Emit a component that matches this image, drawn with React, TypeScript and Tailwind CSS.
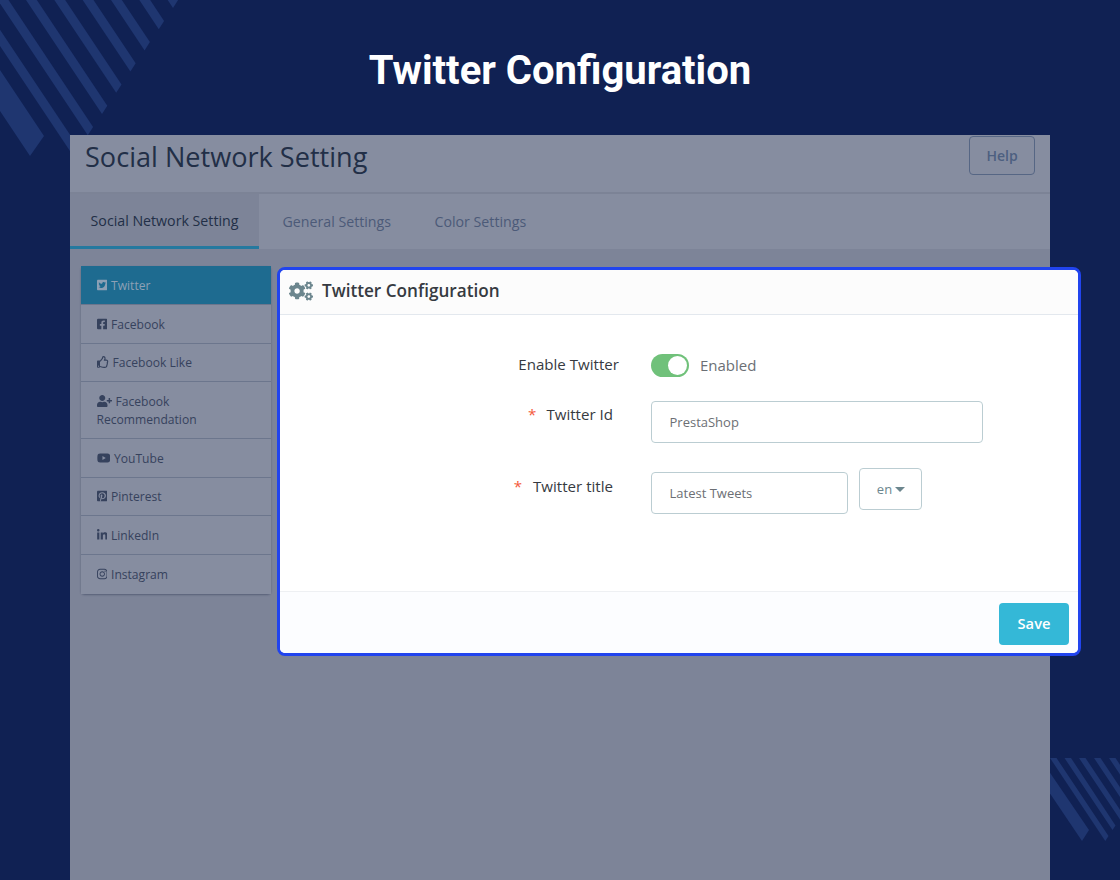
import React from 'react';
import {
  FaCogs,
  FaFacebookSquare,
  FaInstagram,
  FaLinkedinIn,
  FaPinterestSquare,
  FaRegThumbsUp,
  FaTwitterSquare,
  FaUserPlus,
  FaYoutube,
} from 'react-icons/fa';

const menu = [
  { label: 'Twitter', icon: <FaTwitterSquare className="h-[12px] w-[10.5px]" />, active: true },
  { label: 'Facebook', icon: <FaFacebookSquare className="h-[12px] w-[10.5px]" /> },
  { label: 'Facebook Like', icon: <FaRegThumbsUp className="h-[12px] w-[12px]" /> },
  { label: 'Facebook Recommendation', icon: <FaUserPlus className="h-[12px] w-[15px]" />, tall: true },
  { label: 'YouTube', icon: <FaYoutube className="h-[12px] w-[13.5px]" /> },
  { label: 'Pinterest', icon: <FaPinterestSquare className="h-[12px] w-[10.5px]" /> },
  { label: 'LinkedIn', icon: <FaLinkedinIn className="h-[12px] w-[10.5px]" /> },
  { label: 'Instagram', icon: <FaInstagram className="h-[12px] w-[10.5px]" /> },
];

function TopStripes() {
  const tips = [0, 1, 2, 3, 4, 5, 6, 7].map((k) => [173 - 14.2 * k, 8 + 21.2 * k]);
  return (
    <svg className="absolute left-0 top-0" width="200" height="170" viewBox="0 0 200 170">
      {tips.map(([x, y]) => (
        <polygon key={x} fill="#1f3670" points={`${x},${y} ${x + 5.3},${y - 8.3} ${x - 194.7},${y - 308.3} ${x - 200},${y - 300}`} />
      ))}
      <polygon fill="#1f3670" points="30,156 44,136 -56,-14 -70,6" />
    </svg>
  );
}

function BottomStripes() {
  return (
    <svg className="absolute left-[1050px] top-[758px]" width="70" height="90" viewBox="1050 758 70 90">
      <polygon fill="#1f3670" points="1082,841 1089,830 1040,758 1026,758" />
      <polygon fill="#1f3670" points="1105.3,841 1108.5,836 1056.5,758 1050,758" />
      <polygon fill="#1f3670" points="1112.5,830 1115.5,825.5 1071,758 1064.5,758" />
      {[1079, 1094, 1109].map((x) => (
        <polygon key={x} fill="#1f3670" points={`${x + 60},848 ${x + 66.5},848 ${x + 6.5},758 ${x},758`} />
      ))}
    </svg>
  );
}

export default function App() {
  return (
    <div className="relative h-[880px] w-[1120px] overflow-hidden bg-[#102153] font-['Open_Sans',sans-serif]">
      <TopStripes />
      <BottomStripes />
      <h1 className="relative pt-[45px] text-center font-['Roboto',sans-serif] text-[40px] font-bold leading-[52px] text-white">
        Twitter Configuration
      </h1>

      <div className="relative mx-[70px] mt-[38px] h-[745px] bg-[#7d8498]">
        <div className="flex h-[59px] items-start justify-between border-b-2 border-[#7c8396] bg-[#868da0] pl-[15px] pr-[15px]">
          <h2 className="text-[27.1px] leading-[44px] text-[#222f47]">Social Network Setting</h2>
          <button className="mt-[1px] h-[39px] w-[66px] rounded border border-[#566684] text-[14px] font-semibold text-[#4d5f80]">Help</button>
        </div>
        <div className="flex h-[55px] bg-[#868da0]">
          <div className="flex w-[189px] items-center justify-center border-b-[3px] border-[#25799f] bg-[#7d8498] pt-[2px] text-[14.2px] text-[#222f47]">
            Social Network Setting
          </div>
          <div className="flex items-center pl-[23.5px] text-[14.2px] text-[#4c5a78]">General Settings</div>
          <div className="flex items-center pl-[43.5px] text-[14.2px] text-[#4c5a78]">Color Settings</div>
        </div>

        <div className="pl-[11px] pt-[17px]">
          <div className="w-[190px] rounded-sm shadow-[0_1px_2px_rgba(30,40,70,0.4)]">
            {menu.map((item) => (
              <div
                key={item.label}
                className={
                  (item.tall ? 'h-[57px] ' : item.active ? 'h-[39px] ' : 'h-[38.6px] ') +
                  (item.active
                    ? 'border-b border-[#6c768d] bg-[#1e6b90] px-[15.5px] pt-[10.6px] text-[12.1px] leading-[18.5px] text-[#8da0b5]'
                    : 'border-b border-[#6c768d] bg-[#868da0] px-[15.5px] pt-[10.6px] text-[12.1px] leading-[18.5px] text-[#36425d] last:border-b-0')
                }
              >
                <span className="mr-[4px] inline-block align-[-1px]">{item.icon}</span>
                {item.label}
              </div>
            ))}
          </div>
        </div>

        <div className="absolute left-[207px] top-[132px] w-[804px] overflow-hidden rounded-lg border-[3px] border-[#2144ee] bg-white">
          <div className="flex h-[45px] items-center border-b border-[#e3e8ee] bg-[#fcfcfc] pb-[3px] pl-[9px]">
            <FaCogs className="mr-[9px] mt-[1px] text-[24px] text-[#6c868e]" />
            <span className="text-[17.15px] font-semibold text-[#363a41]">Twitter Configuration</span>
          </div>

          <div className="h-[276px] pt-[37px] text-[15.1px] text-[#363a41]">
            <div className="flex h-[27px] items-center">
              <div className="w-[339px] pb-[3px] text-right">Enable Twitter</div>
              <div className="ml-[32px] flex items-center">
                <div className="flex h-[23px] w-[38px] items-center justify-end rounded-full bg-[#70c17a] pr-[2px]">
                  <div className="h-[19px] w-[19px] rounded-full bg-white" />
                </div>
                <span className="ml-[11px] pb-[1px] text-[15px] text-[#6b6f75]">Enabled</span>
              </div>
            </div>

            <div className="mt-[22px] flex items-start">
              <div className="w-[333px] pt-[2px] text-right">
                <span className="mr-[10px] text-[#f4593b]">*</span>Twitter Id
              </div>
              <div className="ml-[38px] flex h-[42px] w-[332px] items-center rounded border border-[#bbcdd2] pl-[17.5px] pt-[1.5px] text-[13px] text-[#6c6f74]">
                PrestaShop
              </div>
            </div>

            <div className="mt-[25px] flex items-start">
              <div className="w-[333px] pt-[7px] text-right">
                <span className="mr-[11px] text-[#f4593b]">*</span>Twitter title
              </div>
              <div className="ml-[38px] mt-[4px] flex h-[42px] w-[197px] items-center rounded border border-[#bbcdd2] pl-[17.5px] pt-[1.5px] text-[13px] text-[#6c6f74]">
                Latest Tweets
              </div>
              <div className="ml-[11px] flex h-[42px] w-[63px] items-center justify-center rounded border border-[#bbcdd2] pl-[1px] pt-[1.5px] text-[13px] text-[#6c868e]">
                en
                <span className="ml-[3px] h-0 w-0 border-x-[5px] border-t-[5px] border-x-transparent border-t-[#6c868e]" />
              </div>
            </div>
          </div>

          <div className="flex h-[62px] items-center justify-end border-t border-[#eef0f3] bg-[#fcfdff] pr-[9px] pt-[2px]">
            <button className="h-[42px] w-[70px] rounded bg-[#34b8d7] text-[14.7px] font-semibold text-white">Save</button>
          </div>
        </div>
      </div>
    </div>
  );
}
